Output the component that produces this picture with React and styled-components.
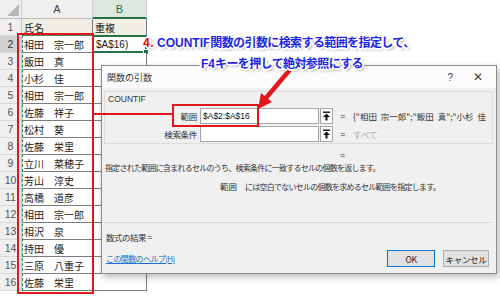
import React from 'react'
import styled, { createGlobalStyle } from 'styled-components'

const jp = `'Noto Sans CJK JP', 'Noto Sans', sans-serif`
const latin = `'Liberation Sans', 'Noto Sans CJK JP', sans-serif`

const GlobalStyle = createGlobalStyle`
  html, body {
    margin: 0;
    padding: 0;
    background: #fff;
  }
  body {
    font-family: ${jp};
  }
`

const Page = styled.div`
  position: relative;
  width: 500px;
  height: 299px;
  overflow: hidden;
  background: #fff;
`

/* ---------- sheet ---------- */

const Sheet = styled.div`
  display: grid;
  grid-template-columns: 22px 71px 54px;
  grid-template-rows: 19px repeat(16, 17px);
  width: 147px;
`

const Corner = styled.div`
  position: relative;
  background: #efefef;
  border-right: 1px solid #cfcfcf;
  border-bottom: 1px solid #bdbdbd;
  &::after {
    content: '';
    position: absolute;
    right: 2px;
    bottom: 2px;
    border-style: solid;
    border-width: 0 0 12px 12px;
    border-color: transparent transparent #b8b8b8 transparent;
  }
`

const ColHead = styled.div`
  display: flex;
  align-items: center;
  justify-content: center;
  font: 11px ${latin};
  color: ${({ active }) => (active ? '#217346' : '#444')};
  background: ${({ active }) => (active ? '#dce8de' : '#efefef')};
  border-right: 1px solid #cfcfcf;
  border-bottom: ${({ active }) => (active ? '2px solid #217346' : '1px solid #bdbdbd')};
  box-sizing: border-box;
`

const RowHead = styled.div`
  display: flex;
  align-items: center;
  justify-content: center;
  font: 10.5px ${latin};
  color: ${({ active }) => (active ? '#333' : '#555')};
  background: ${({ active }) => (active ? '#d2d2d2' : '#efefef')};
  border-right: 1px solid #c4c4c4;
  border-bottom: 1px solid #d8d8d8;
  box-sizing: border-box;
`

const Cell = styled.div`
  position: relative;
  display: flex;
  align-items: center;
  padding-left: 2px;
  font: 10px ${jp};
  color: #1a1a1a;
  white-space: nowrap;
  background: ${({ head }) => (head ? '#f1efe3' : '#fff')};
  border-right: 1px solid #7c7c7c;
  border-bottom: 1px solid #7c7c7c;
  box-sizing: border-box;
`

const FormulaText = styled.span`
  font: 10px ${latin};
  padding-left: 1px;
`

const ActiveFrame = styled.div`
  position: absolute;
  left: -1px;
  top: -1px;
  right: -1px;
  bottom: -1px;
  border: 2px solid #217346;
  &::after {
    content: '';
    position: absolute;
    right: -4px;
    bottom: -4px;
    width: 4px;
    height: 4px;
    background: #217346;
    border: 1px solid #fff;
  }
`

/* ---------- annotations over the sheet ---------- */

const RangeBox = styled.div`
  position: absolute;
  left: 17px;
  top: 33px;
  width: 77px;
  height: 261px;
  box-sizing: border-box;
  border: 2.5px solid #e3161b;
`

const MarchingAnts = styled.div`
  position: absolute;
  left: 22px;
  top: 35px;
  width: 71px;
  height: 256px;
  box-sizing: border-box;
  border: 1.5px dashed #2e8b57;
`

const Connector = styled.div`
  position: absolute;
  left: 94px;
  top: 113px;
  width: 79px;
  height: 2px;
  background: #e3161b;
`

const LabelBox = styled.div`
  position: absolute;
  left: 172px;
  top: 104px;
  width: 87px;
  height: 23px;
  box-sizing: border-box;
  border: 2.5px solid #e3161b;
`

const ArrowLayer = styled.svg`
  position: absolute;
  left: 0;
  top: 0;
  pointer-events: none;
`

const Callout = styled.div`
  position: absolute;
  left: ${({ x }) => x}px;
  top: ${({ y }) => y}px;
  font: bold 12px/14px ${jp};
  letter-spacing: -0.6px;
  color: #1c26e6;
  white-space: nowrap;
  text-shadow:
    -1px -1px 0 #fff, 1px -1px 0 #fff, -1px 1px 0 #fff, 1px 1px 0 #fff,
    0 -2px 0 #fff, 0 2px 0 #fff, -2px 0 0 #fff, 2px 0 0 #fff,
    2px 2px 3px rgba(0, 0, 0, 0.45);
`

const Step = styled.span`
  color: #e8141c;
  margin-right: 3px;
  letter-spacing: 0;
`

const Latin = styled.span`
  font-family: ${latin};
  letter-spacing: 0;
`

/* ---------- dialog ---------- */

const Dialog = styled.div`
  position: absolute;
  left: 101px;
  top: 65px;
  width: 396px;
  height: 209px;
  box-sizing: border-box;
  display: flex;
  flex-direction: column;
  background: #f0f0f0;
  border: 1px solid #8c8c8c;
  box-shadow: 2px 3px 7px rgba(0, 0, 0, 0.28);
  color: #222;
  font-family: ${jp};
`

const TitleBar = styled.div`
  display: flex;
  align-items: center;
  height: 22px;
  padding: 0 4px 0 5px;
  background: #fbfbfb;
  font-size: 9px;
  color: #333;
`

const TitleButtons = styled.div`
  display: flex;
  align-items: center;
  gap: 20px;
  margin-left: auto;
  padding-right: 9px;
  font: 10px ${latin};
  color: #444;
`

const CloseGlyph = styled.span`
  font-size: 12px;
  font-weight: 300;
`

const Body = styled.div`
  display: flex;
  flex-direction: column;
  padding: 0 3px 0 2px;
`

const GroupBox = styled.div`
  margin-top: 3px;
  padding: 1px 0 1px;
  border: 1px solid #dcdcdc;
`

const GroupTitle = styled.div`
  padding-left: 3px;
  font: 8.5px/12px ${latin};
  color: #333;
`

const ArgGrid = styled.div`
  display: grid;
  grid-template-columns: 95px 120px 13px 20px 1fr;
  grid-auto-rows: 16px;
  row-gap: 2px;
  margin-top: 3px;
  align-items: center;
`

const ArgLabel = styled.div`
  padding-right: 3px;
  text-align: right;
  font-size: 8.5px;
  letter-spacing: -0.3px;
  color: #333;
`

const ArgInput = styled.div`
  height: 16px;
  width: 119px;
  box-sizing: border-box;
  display: flex;
  align-items: center;
  padding-left: 2px;
  background: #fff;
  border: 1px solid #a6a6a6;
  font: 8.5px ${latin};
  color: #111;
`

const RefButton = styled.div`
  height: 16px;
  box-sizing: border-box;
  display: flex;
  align-items: center;
  justify-content: center;
  background: #fdfdfd;
  border: 1px solid #a6a6a6;
`

const Eq = styled.div`
  text-align: center;
  font: 9px ${latin};
  color: #333;
`

const ArgValue = styled.div`
  white-space: nowrap;
  font-size: 8.5px;
  letter-spacing: 0;
  word-spacing: 2px;
  color: ${({ muted }) => (muted ? '#a8a8a8' : '#333')};
`

const ResultEq = styled.div`
  margin-top: 5px;
  padding-left: 236px;
  font: 9px/12px ${latin};
  color: #333;
`

const Description = styled.div`
  margin-top: ${({ gap }) => gap}px;
  padding-left: ${({ indent }) => indent}px;
  font-size: 8px;
  line-height: 12px;
  letter-spacing: -0.75px;
  color: #333;
  white-space: nowrap;
`

const ArgName = styled.span`
  margin-right: 8px;
  letter-spacing: 0;
  font-size: 8.5px;
`

const Separator = styled.div`
  margin-top: 29px;
  border-top: 1px solid #dadada;
`

const ResultLine = styled.div`
  margin-top: 8px;
  padding-left: 2px;
  font-size: 8.5px;
  line-height: 12px;
  letter-spacing: -0.5px;
  color: #333;
`

const Footer = styled.div`
  display: flex;
  align-items: center;
  height: 19px;
  margin-top: 6px;
  padding: 0 4px 0 2px;
`

const HelpLink = styled.a`
  font-size: 8px;
  letter-spacing: -0.6px;
  color: #1a6fd1;
  text-decoration: underline;
`

const Buttons = styled.div`
  display: flex;
  gap: 8px;
  margin-left: auto;
`

const Button = styled.div`
  width: ${({ w }) => w}px;
  height: 17px;
  box-sizing: border-box;
  display: flex;
  align-items: center;
  justify-content: center;
  background: #e1e1e1;
  border: 1px solid ${({ primary }) => (primary ? '#0078d7' : '#adadad')};
  font: 8.5px ${jp};
  letter-spacing: -0.3px;
  color: #222;
`

const RefIcon = () => (
  <svg width="9" height="10" viewBox="0 0 9 10">
    <rect x="1" y="0.5" width="7" height="1.4" fill="#111" />
    <path d="M4.5 2.6 L8 6 L5.5 6 L5.5 9.5 L3.5 9.5 L3.5 6 L1 6 Z" fill="#111" />
  </svg>
)

const names = [
  '相田　宗一郎',
  '飯田　真',
  '小杉　佳',
  '相田　宗一郎',
  '佐藤　祥子',
  '松村　葵',
  '佐藤　栄里',
  '立川　菜穂子',
  '芳山　淳史',
  '高橋　道彦',
  '相田　宗一郎',
  '相沢　泉',
  '持田　優',
  '三原　八重子',
  '佐藤　栄里',
]

const App = () => {
  return (
    <Page>
      <GlobalStyle />

      <Sheet>
        <Corner />
        <ColHead>A</ColHead>
        <ColHead active>B</ColHead>

        <RowHead>1</RowHead>
        <Cell head>氏名</Cell>
        <Cell head>重複</Cell>

        {names.map((name, index) => {
          const row = index + 2
          return (
            <React.Fragment key={row}>
              <RowHead active={row === 2}>{row}</RowHead>
              <Cell>{name}</Cell>
              <Cell>
                {row === 2 && (
                  <>
                    <FormulaText>$A$16)</FormulaText>
                    <ActiveFrame />
                  </>
                )}
              </Cell>
            </React.Fragment>
          )
        })}
      </Sheet>

      <MarchingAnts />
      <RangeBox />

      <Dialog>
        <TitleBar>
          関数の引数
          <TitleButtons>
            <span>?</span>
            <CloseGlyph>✕</CloseGlyph>
          </TitleButtons>
        </TitleBar>

        <Body>
          <GroupBox>
            <GroupTitle>COUNTIF</GroupTitle>
            <ArgGrid>
              <ArgLabel>範囲</ArgLabel>
              <ArgInput>$A$2:$A$16</ArgInput>
              <RefButton>
                <RefIcon />
              </RefButton>
              <Eq>=</Eq>
              <ArgValue>{'{"相田 宗一郎";"飯田 真";"小杉 佳'}</ArgValue>

              <ArgLabel>検索条件</ArgLabel>
              <ArgInput />
              <RefButton>
                <RefIcon />
              </RefButton>
              <Eq>=</Eq>
              <ArgValue muted>すべて</ArgValue>
            </ArgGrid>
          </GroupBox>

          <ResultEq>=</ResultEq>
          <Description gap={1} indent={1}>
            指定された範囲に含まれるセルのうち、検索条件に一致するセルの個数を返します。
          </Description>
          <Description gap={6} indent={116}>
            <ArgName>範囲</ArgName>
            には空白でないセルの個数を求めるセル範囲を指定します。
          </Description>

          <Separator />
          <ResultLine>数式の結果 =</ResultLine>

          <Footer>
            <HelpLink>この関数のヘルプ(H)</HelpLink>
            <Buttons>
              <Button w={48} primary>
                OK
              </Button>
              <Button w={46}>キャンセル</Button>
            </Buttons>
          </Footer>
        </Body>
      </Dialog>

      <Connector />
      <LabelBox />

      <ArrowLayer width="500" height="299">
        <line x1="293" y1="66" x2="266" y2="98" stroke="#e3161b" strokeWidth="4.5" />
        <polygon points="258,109 272,102 261,93" fill="#e3161b" />
      </ArrowLayer>

      <Callout x={143} y={35}>
        <Step>4.</Step>
        <Latin>COUNTIF</Latin>関数の引数に検索する範囲を指定して、
      </Callout>
      <Callout x={201} y={56}>
        <Latin>F4</Latin>キーを押して絶対参照にする
      </Callout>
    </Page>
  )
}

export default App
